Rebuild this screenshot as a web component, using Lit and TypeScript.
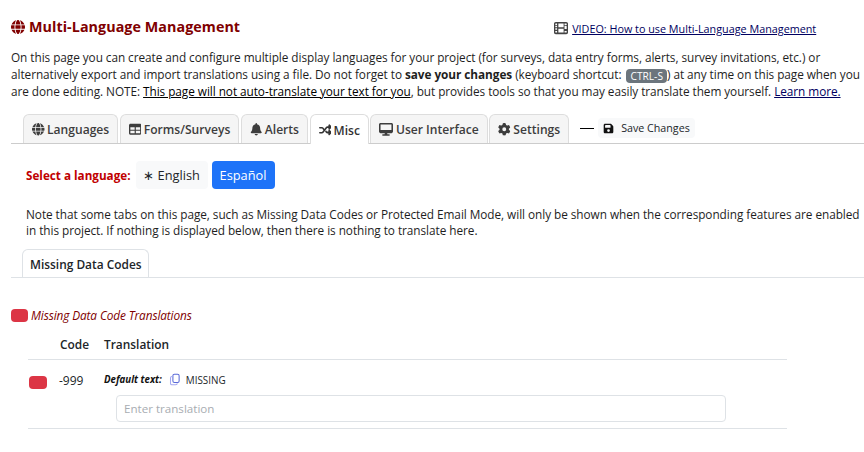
import { LitElement, html, css } from "lit";
import { customElement } from "lit/decorators.js";

const globe = html`<svg class="ic" viewBox="0 0 512 512"><path fill="currentColor" d="M352 256c0 22-1 44-4 64H164c-3-20-4-42-4-64s1-44 4-64h184c3 20 4 42 4 64zm28-64h123c5 20 9 42 9 64s-3 44-9 64H380c2-21 4-42 4-64s-2-43-4-64zm113-32H376c-10-64-30-118-55-152 76 20 137 76 172 152zm-149 0H168c6-36 15-69 27-95 10-24 22-41 33-52 11-10 20-13 28-13s17 3 28 13c11 11 23 28 33 52 12 26 21 59 27 95zm-208 0H19C54 84 115 28 191 8c-25 34-45 88-55 152zM9 192h123c-2 21-4 42-4 64s2 43 4 64H9c-5-20-9-42-9-64s3-44 9-64zm186 256c-12-26-21-59-27-96h176c-6 37-15 70-27 96-10 23-22 40-33 51-11 10-20 13-28 13s-17-3-28-13c-11-11-23-28-33-51zm-4 56C115 484 54 428 19 352h117c10 64 30 118 55 152zm130 0c25-34 45-88 55-152h117c-35 76-96 132-172 152z"/></svg>`;
const table = html`<svg class="ic" viewBox="0 0 512 512"><path fill="currentColor" d="M64 32C29 32 0 61 0 96v320c0 35 29 64 64 64h384c35 0 64-29 64-64V96c0-35-29-64-64-64H64zm-8 144h176v96H56v-96zm224 0h176v96H280v-96zM56 320h176v104H64c-4 0-8-4-8-8v-96zm224 104V320h176v96c0 4-4 8-8 8H280z"/></svg>`;
const bell = html`<svg class="ic" viewBox="0 0 448 512"><path fill="currentColor" d="M224 0c-18 0-32 14-32 32v19C119 66 64 131 64 208v19c0 47-17 92-48 127l-8 8c-8 10-10 23-5 35s16 19 29 19h384c13 0 24-7 29-19s3-25-5-35l-8-8c-31-35-48-80-48-127v-19c0-77-55-142-128-157V32c0-18-14-32-32-32zm45 493c12-12 19-28 19-45H160c0 17 7 33 19 45s28 19 45 19 33-7 45-19z"/></svg>`;
const shuffle = html`<svg class="ic" viewBox="0 0 512 512"><path fill="currentColor" d="M403 34c-9 4-19 12-19 22v40h-32c-30 0-59 14-77 38L142 312c-6 8-15 12-25 12H32c-18 0-32 14-32 32s14 32 32 32h85c30 0 59-14 77-38l133-178c6-8 15-12 25-12h32v40c0 13 8 24 20 29s26 2 35-7l80-80c12-12 12-32 0-45l-80-80c-9-9-23-12-36-7zM142 200l40 53 40-53-28-37c-18-24-47-38-77-38H32c-18 0-32 14-32 32s14 32 32 32h85c10 0 19 4 25 11zm185 112-40-53-40 53 28 38c18 24 47 38 77 38h32v40c0 13 8 24 20 29s26 2 35-7l80-80c12-12 12-32 0-45l-80-80c-9-9-23-12-35-7s-20 17-20 30v40h-32c-10 0-19-5-25-13z"/></svg>`;
const desktop = html`<svg class="ic wide" viewBox="0 0 576 512"><path fill="currentColor" d="M64 0C29 0 0 29 0 64v288c0 35 29 64 64 64h176l-11 48h-69c-18 0-32 14-32 32s14 32 32 32h256c18 0 32-14 32-32s-14-32-32-32h-69l-11-48h176c35 0 64-29 64-64V64c0-35-29-64-64-64H64zm448 64v224H64V64h448z"/></svg>`;
const gear = html`<svg class="ic" viewBox="0 0 512 512"><path fill="currentColor" d="M495 167c3 9 1 18-6 25l-43 39c1 8 2 17 2 25s-1 17-2 25l43 39c7 7 9 16 6 25-4 12-10 23-16 34l-5 8c-7 11-14 21-22 31-6 7-15 9-24 6l-56-18c-13 10-28 19-43 25l-13 57c-2 9-9 16-18 18-14 2-28 3-43 3s-29-1-43-3c-9-2-16-9-18-18l-13-57c-15-6-30-15-43-25l-55 18c-9 3-19 1-25-6-8-10-15-20-22-31l-5-8c-6-11-12-22-16-34-3-9-1-18 6-25l43-39c-1-8-2-17-2-25s1-17 2-25l-43-39c-7-7-9-16-6-25 4-12 10-23 16-34l5-8c7-11 14-21 22-31 6-7 16-9 25-6l55 18c13-10 28-19 43-25l13-57c2-9 9-16 18-18 14-2 28-3 43-3s29 1 43 3c9 2 16 9 18 18l13 57c15 6 30 15 43 25l56-18c9-3 18-1 24 6 8 10 15 20 22 31l5 8c6 11 12 22 16 34zM256 336a80 80 0 1 0 0-160 80 80 0 1 0 0 160z"/></svg>`;
const film = html`<svg class="film" viewBox="0 0 512 512"><path fill="currentColor" d="M0 96c0-35 29-64 64-64h384c35 0 64 29 64 64v320c0 35-29 64-64 64H64c-35 0-64-29-64-64V96zm48 272v40c0 9 7 16 16 16h48v-56H48zm336 56h64c9 0 16-7 16-16v-40h-80v56zm-224 0h192V280H160v144zm-112-192h64v-56H48v56zm0 88h64v-56H48v56zm400-144h-64v56h80v-40zM384 232v56h80v-56h-80zM160 232h192V88H160v144zM48 104v40h64V88H64c-9 0-16 7-16 16zm336-16v56h80v-40c0-9-7-16-16-16h-64z"/></svg>`;
const save = html`<svg class="save" viewBox="0 0 448 512"><path fill="currentColor" d="M64 32C29 32 0 61 0 96v320c0 35 29 64 64 64h320c35 0 64-29 64-64V173c0-17-7-33-19-45L352 51c-12-12-28-19-45-19H64zm0 96c0-18 14-32 32-32h192c18 0 32 14 32 32v64c0 18-14 32-32 32H96c-18 0-32-14-32-32v-64zm160 160a64 64 0 1 1 0 128 64 64 0 1 1 0-128z"/></svg>`;
const copy = html`<svg class="copy" viewBox="0 0 16 16"><rect x="5.2" y="1" width="8.3" height="11" rx="2" fill="none" stroke="#5a6ad8" stroke-width="1.4"/><path d="M5 4H4a2 2 0 0 0-2 2v7.5a1.8 1.8 0 0 0 2 1.5h5a2 2 0 0 0 2-2" fill="none" stroke="#a4a8f0" stroke-width="1.4"/></svg>`;

@customElement("app-root")
export class AppRoot extends LitElement {
  static styles = css`
    :host { display: block; width: 864px; height: 452px; overflow: hidden; background: #fff; font-family: "Open Sans", sans-serif; font-size: 11.8px; color: #212529; }
    .page { padding: 18px 0 0 11px; }
    .head { display: flex; align-items: center; height: 18px; }
    h1 { margin: 0; font-size: 14.3px; font-weight: 700; color: #800000; display: flex; align-items: center; gap: 4px; line-height: 18px; letter-spacing: 0.06px; }
    h1 .ic { width: 14px; height: 14px; }
    .video { margin-left: 314px; display: flex; align-items: center; gap: 4px; font-size: 10.8px; color: #000060; text-decoration: underline; position: relative; top: 1px; }
    .film { width: 14px; height: 14px; color: #444; }
    .intro { margin: 13px 0 0; line-height: 16.6px; width: 853px; letter-spacing: -0.055px; color: #1e1e1e; }
    .intro u { color: #000; }
    .intro a { color: #000060; }
    .badge { display: inline-block; background: #6c757d; color: #fff; font-size: 10.2px; line-height: 12px; padding: 1px 4px; border-radius: 4px; margin: 0 0 0 2px; vertical-align: -1px; letter-spacing: 0; }
    .tabs { display: flex; align-items: flex-end; margin-top: 14px; padding-left: 12px; height: 30px; border-bottom: 1px solid #ccc; gap: 1.5px; }
    .tab { height: 29px; box-sizing: border-box; display: flex; align-items: center; gap: 2.5px; padding: 1px 8px 0; background: #f5f5f5; border: 1px solid #ddd; border-bottom: none; border-radius: 6px 6px 0 0; font-weight: 600; font-size: 12.1px; color: #3d3d3d; }
    .tab.active { background: #fff; color: #333; height: 30px; margin-bottom: -1px; }
    .ic { width: 12.5px; height: 12.5px; flex: none; }
    .ic.wide { width: 14px; }
    .dash { width: 14px; height: 1px; background: #000; margin: 0 3px 0 9px; align-self: center; }
    .savebtn { align-self: center; display: flex; align-items: center; gap: 7px; background: #f8f9fa; border-radius: 4px; height: 20px; padding: 0 5px; font-size: 10.7px; color: #212529; }
    .save { width: 11px; height: 11px; color: #111; }
    .lang { display: flex; align-items: center; margin: 17px 0 0 15px; }
    .lang b { color: #c00000; font-size: 11.7px; font-weight: 700; margin-right: 5px; }
    .btn { height: 28px; display: flex; align-items: center; border-radius: 4px; font-size: 12.8px; box-sizing: border-box; justify-content: center; }
    .btn.en { background: #f8f9fa; color: #212529; width: 72px; margin-right: 4px; }
    .btn.es { background: #1e73f8; color: #fff; width: 63px; }
    .note { margin: 17px 0 0 15px; line-height: 16px; width: 838px; letter-spacing: -0.05px; color: #1e1e1e; }
    .subtabs { display: flex; margin-top: 11px; height: 28px; padding-left: 11px; border-bottom: 1px solid #dee2e6; }
    .subtab { height: 28px; box-sizing: border-box; padding: 0 6px 0 7px; display: flex; align-items: center; border: 1px solid #dee2e6; border-bottom: none; border-radius: 6px 6px 0 0; background: #fff; font-weight: 600; font-size: 11.9px; color: #212529; }
    .sec { display: flex; align-items: center; gap: 3px; margin-top: 28px; height: 18px; font-style: italic; font-size: 11.85px; color: #800000; letter-spacing: -0.01em; }
    .pill { background: #dc3545; border-radius: 4px; display: block; flex: none; }
    .sec .pill { width: 17px; height: 13px; }
    table { border-collapse: collapse; width: 759px; margin: 8px 0 0 17px; }
    th { text-align: left; font-weight: 600; font-size: 11.9px; color: #212529; height: 27px; padding: 0 0 3px; box-sizing: border-box; }
    .r td { border-top: 1px solid #dee2e6; border-bottom: 1px solid #dee2e6; padding: 0; vertical-align: top; height: 68px; }
    .c1 { width: 32px; }
    .c2 { width: 44px; }
    .r .pill { width: 18px; height: 13px; margin: 16px 0 0 1px; }
    .code { margin-top: 13px; margin-left: -1px; font-size: 12px; line-height: 16px; }
    .def { display: flex; align-items: center; gap: 7px; margin-top: 11px; height: 18px; font-size: 9.9px; color: #212529; }
    .def b { font-style: italic; font-weight: 700; font-size: 9.7px; color: #111; }
    .copy { width: 12px; height: 13px; margin-right: -2px; }
    input { display: block; box-sizing: border-box; width: 610px; height: 27px; margin: 6px 0 0 12px; border: 1px solid #dee2e6; border-radius: 4px; padding: 0 7px; font: 11.6px "Open Sans", sans-serif; outline: none; }
    input::placeholder { color: #a8adb2; opacity: 1; }
  `;

  render() {
    return html`<div class="page">
      <div class="head">
        <h1>${globe}Multi-Language Management</h1>
        <a class="video">${film}<span>VIDEO: How to use Multi-Language Management</span></a>
      </div>
      <p class="intro">On this page you can create and configure multiple display languages for your project (for surveys, data entry forms, alerts, survey invitations, etc.) or alternatively export and import translations using a file. Do not forget to <b>save your changes</b> (keyboard shortcut: <span class="badge">CTRL-S</span>) at any time on this page when you are done editing. NOTE: <u>This page will not auto-translate your text for you</u>, but provides tools so that you may easily translate them yourself. <a href="#">Learn more.</a></p>
      <div class="tabs">
        <div class="tab">${globe}Languages</div>
        <div class="tab">${table}Forms/Surveys</div>
        <div class="tab">${bell}Alerts</div>
        <div class="tab active">${shuffle}Misc</div>
        <div class="tab">${desktop}User Interface</div>
        <div class="tab">${gear}Settings</div>
        <div class="dash"></div>
        <div class="savebtn">${save}<span>Save Changes</span></div>
      </div>
      <div class="lang"><b>Select a language:</b>
        <div class="btn en">∗ English</div>
        <div class="btn es">Español</div>
      </div>
      <p class="note">Note that some tabs on this page, such as Missing Data Codes or Protected Email Mode, will only be shown when the corresponding features are enabled in this project. If nothing is displayed below, then there is nothing to translate here.</p>
      <div class="subtabs"><div class="subtab">Missing Data Codes</div></div>
      <div class="sec"><span class="pill"></span>Missing Data Code Translations</div>
      <table>
        <tr><th class="c1"></th><th class="c2">Code</th><th>Translation</th></tr>
        <tr class="r">
          <td><span class="pill"></span></td>
          <td><div class="code">-999</div></td>
          <td>
            <div class="def"><b>Default text:</b>${copy}<span>MISSING</span></div>
            <input placeholder="Enter translation" />
          </td>
        </tr>
      </table>
    </div>`;
  }
}
